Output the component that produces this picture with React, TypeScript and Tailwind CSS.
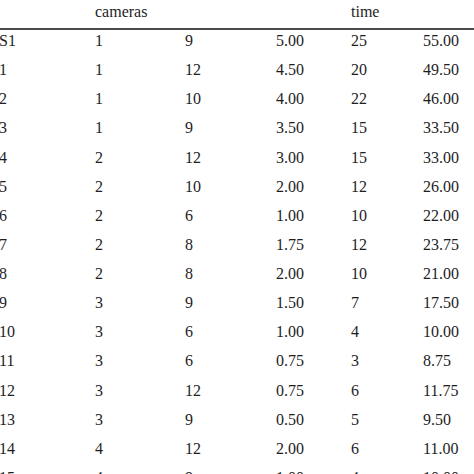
import React from "react";

const rows: string[][] = [
  ["S1", "1", "9", "5.00", "25", "55.00"],
  ["1", "1", "12", "4.50", "20", "49.50"],
  ["2", "1", "10", "4.00", "22", "46.00"],
  ["3", "1", "9", "3.50", "15", "33.50"],
  ["4", "2", "12", "3.00", "15", "33.00"],
  ["5", "2", "10", "2.00", "12", "26.00"],
  ["6", "2", "6", "1.00", "10", "22.00"],
  ["7", "2", "8", "1.75", "12", "23.75"],
  ["8", "2", "8", "2.00", "10", "21.00"],
  ["9", "3", "9", "1.50", "7", "17.50"],
  ["10", "3", "6", "1.00", "4", "10.00"],
  ["11", "3", "6", "0.75", "3", "8.75"],
  ["12", "3", "12", "0.75", "6", "11.75"],
  ["13", "3", "9", "0.50", "5", "9.50"],
  ["14", "4", "12", "2.00", "6", "11.00"],
  ["15", "4", "9", "1.00", "4", "10.00"],
];

const cols = "grid grid-cols-[95px_90px_91px_75px_72px_1fr]";

export default function App() {
  return (
    <div
      className="w-[474px] h-[474px] overflow-hidden bg-white text-[#1e1e1e] text-[16px] leading-4"
      style={{ fontFamily: '"Liberation Serif", "Times New Roman", serif' }}
    >
      {/* header */}
      <div className={`${cols} h-[28px] pt-[3.6px]`}>
        <div />
        <div>cameras</div>
        <div />
        <div />
        <div>time</div>
        <div />
      </div>
      <div className="h-[1.5px] bg-[#4a4a4a]" />

      {/* body */}
      {rows.map((r, i) => (
        <div key={i} className={`${cols} h-[29.14px] pt-[3.6px]`}>
          <div className="-ml-[1px]">{r[0]}</div>
          <div>{r[1]}</div>
          <div>{r[2]}</div>
          <div>{r[3]}</div>
          <div>{r[4]}</div>
          <div>{r[5]}</div>
        </div>
      ))}
    </div>
  );
}
